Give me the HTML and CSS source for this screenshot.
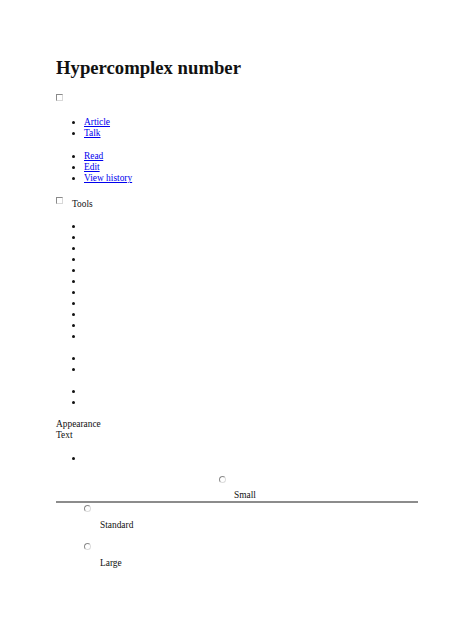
FILE: index.html
```html
<!DOCTYPE html>
<html lang="en">
<head>
<meta charset="utf-8">
<title>Hypercomplex number</title>
<link rel="stylesheet" href="styles.css">
</head>
<body>
<div class="page">
  <h1 class="title">Hypercomplex number</h1>
  <div class="check-row"><span class="checkbox"></span></div>
  <ul class="list list-first">
    <li><a href="#">Article</a></li>
    <li><a href="#">Talk</a></li>
  </ul>
  <ul class="list">
    <li><a href="#">Read</a></li>
    <li><a href="#">Edit</a></li>
    <li><a href="#">View history</a></li>
  </ul>
  <div class="tools-row"><span class="checkbox"></span><span class="tools-label">Tools</span></div>
  <ul class="list list-tools">
    <li></li><li></li><li></li><li></li><li></li><li></li><li></li><li></li><li></li><li></li><li></li>
  </ul>
  <ul class="list list-gap">
    <li></li><li></li>
  </ul>
  <ul class="list list-gap">
    <li></li><li></li>
  </ul>
  <div class="appearance">
    <div class="line">Appearance</div>
    <div class="line">Text</div>
  </div>
  <ul class="list list-appear">
    <li></li>
  </ul>
  <div class="size-small">
    <div class="radio-wrap radio-small"><span class="radio"></span></div>
    <div class="small-label">Small</div>
  </div>
  <div class="sizes">
    <div class="size-opt">
      <span class="radio"></span>
      <div class="opt-label">Standard</div>
    </div>
    <div class="size-opt">
      <span class="radio"></span>
      <div class="opt-label">Large</div>
    </div>
  </div>
</div>
</body>
</html>
```

FILE: styles.css
```css
html, body {
  margin: 0;
  padding: 0;
  background: #ffffff;
}
body {
  font-family: "Liberation Serif", "Times New Roman", serif;
  font-size: 9.4px;
  line-height: 11px;
  color: #111;
}
.page {
  margin: 0 56px;
  padding-top: 56px;
}
.title {
  font-size: 18.7px;
  line-height: 24px;
  font-weight: bold;
  margin: 0;
}
.check-row {
  margin-top: 14px;
  height: 8px;
}
.checkbox {
  display: inline-block;
  width: 5px;
  height: 5px;
  border: 1px solid;
  border-color: #8a8a8a #d8d8d8 #d8d8d8 #8a8a8a;
  vertical-align: top;
}
.list {
  margin: 12px 0 0 0;
  padding-left: 28px;
  list-style: disc;
}
.list li {
  height: 11px;
}
.list-first {
  margin-top: 15px;
}
a {
  color: #0000ee;
  text-decoration: underline;
}
.tools-row {
  margin-top: 13px;
  display: flex;
  align-items: flex-start;
  height: 11px;
}
.tools-label {
  margin-left: 9px;
  padding-top: 2px;
}
.list-tools {
  margin-top: 13px;
}
.list-gap {
  margin-top: 11px;
}
.appearance {
  margin-top: 11px;
}
.list-appear {
  margin-top: 12px;
}
.size-small {
  margin-top: 12px;
  border-bottom: 2px solid #8c8c8c;
}
.radio-wrap {
  height: 11px;
}
.radio-small {
  padding-left: 163px;
}
.radio {
  display: inline-block;
  width: 5px;
  height: 5px;
  border: 1px solid;
  border-radius: 50%;
  border-color: #8a8a8a #dcdcdc #dcdcdc #8a8a8a;
  vertical-align: top;
}
.small-label {
  text-align: center;
  padding-left: 16px;
  margin-top: 3px;
}
.sizes {
  padding-left: 28px;
}
.size-opt {
  padding-top: 2px;
  margin-bottom: 10px;
}
.opt-label {
  margin-top: 4px;
  padding-left: 16px;
}
```
